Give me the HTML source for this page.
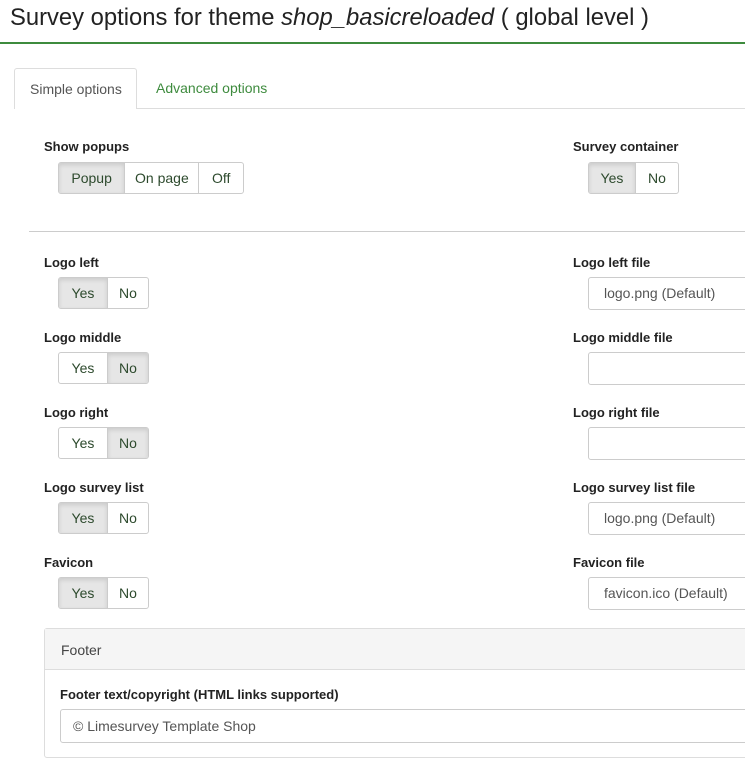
<!DOCTYPE html>
<html><head><style>
body{margin:0;width:745px;height:739px;overflow:hidden;background:#fff;font-family:"Liberation Sans",sans-serif;color:#333;position:relative}
.a{position:absolute}
h1{position:absolute;left:10px;top:4px;margin:0;font-size:23.8px;font-weight:normal;color:#222;white-space:nowrap}
.lbl{position:absolute;font-size:13px;font-weight:bold;color:#222}
.bg{position:absolute;display:flex;height:32px;border:1px solid #ccc;border-radius:3px;box-sizing:border-box;overflow:hidden}
.bg span{display:flex;align-items:center;justify-content:center;font-size:14px;color:#2d4a2d;border-left:1px solid #ccc;box-sizing:border-box}
.bg span:first-child{border-left:none}
.bg span.on{background:#e6e6e6;box-shadow:inset 0 2px 4px rgba(0,0,0,.12)}
.in{position:absolute;left:588px;width:170px;height:33px;border:1px solid #ccc;border-radius:3px;box-sizing:border-box;font-size:14px;color:#555;padding:7px 15px}
</style></head><body>
<h1>Survey options for theme <i>shop_basicreloaded</i> ( global level )</h1>
<div class="a" style="left:0;top:42px;width:745px;height:2px;background:#3e8b3e"></div>
<div class="a" style="left:14px;top:108px;width:731px;height:1px;background:#ddd"></div>
<div class="a" style="left:14px;top:68px;width:123px;height:41px;border:1px solid #ddd;border-bottom:none;border-radius:3px 3px 0 0;background:#fff;box-sizing:border-box;font-size:14px;color:#555;padding:12px 0 0 15px">Simple options</div>
<div class="a" style="left:156px;top:80px;font-size:14px;color:#3e8b3e">Advanced options</div>

<div class="lbl" style="left:44px;top:139px">Show popups</div>
<div class="bg" style="left:58px;top:162px;width:186px"><span class="on" style="width:66px">Popup</span><span style="width:75px">On page</span><span style="width:45px">Off</span></div>
<div class="lbl" style="left:573px;top:139px">Survey container</div>
<div class="bg" style="left:588px;top:162px;width:91px"><span class="on" style="width:47px">Yes</span><span style="width:44px">No</span></div>
<div class="a" style="left:29px;top:231px;width:716px;height:1px;background:#ccc"></div>

<div class="lbl" style="left:44px;top:255px">Logo left</div>
<div class="bg" style="left:58px;top:277px;width:91px"><span class="on" style="width:49px">Yes</span><span style="width:42px">No</span></div>
<div class="lbl" style="left:573px;top:255px">Logo left file</div>
<div class="in" style="top:277px">logo.png (Default)</div>

<div class="lbl" style="left:44px;top:330px">Logo middle</div>
<div class="bg" style="left:58px;top:352px;width:91px"><span style="width:49px">Yes</span><span class="on" style="width:42px">No</span></div>
<div class="lbl" style="left:573px;top:330px">Logo middle file</div>
<div class="in" style="top:352px"></div>

<div class="lbl" style="left:44px;top:405px">Logo right</div>
<div class="bg" style="left:58px;top:427px;width:91px"><span style="width:49px">Yes</span><span class="on" style="width:42px">No</span></div>
<div class="lbl" style="left:573px;top:405px">Logo right file</div>
<div class="in" style="top:427px"></div>

<div class="lbl" style="left:44px;top:480px">Logo survey list</div>
<div class="bg" style="left:58px;top:502px;width:91px"><span class="on" style="width:49px">Yes</span><span style="width:42px">No</span></div>
<div class="lbl" style="left:573px;top:480px">Logo survey list file</div>
<div class="in" style="top:502px">logo.png (Default)</div>

<div class="lbl" style="left:44px;top:555px">Favicon</div>
<div class="bg" style="left:58px;top:577px;width:91px"><span class="on" style="width:49px">Yes</span><span style="width:42px">No</span></div>
<div class="lbl" style="left:573px;top:555px">Favicon file</div>
<div class="in" style="top:577px">favicon.ico (Default)</div>

<div class="a" style="left:44px;top:628px;width:720px;height:130px;border:1px solid #ddd;border-radius:3px;box-sizing:border-box">
<div style="height:41px;background:#f5f5f5;border-bottom:1px solid #ddd;box-sizing:border-box;font-size:14px;color:#444;padding:13px 0 0 16px">Footer</div>
</div>
<div class="lbl" style="left:60px;top:687px">Footer text/copyright (HTML links supported)</div>
<div class="a" style="left:60px;top:709px;width:700px;height:34px;border:1px solid #ccc;border-radius:3px;box-sizing:border-box;font-size:14px;color:#555;padding:8px 12px">© Limesurvey Template Shop</div>
</body></html>
